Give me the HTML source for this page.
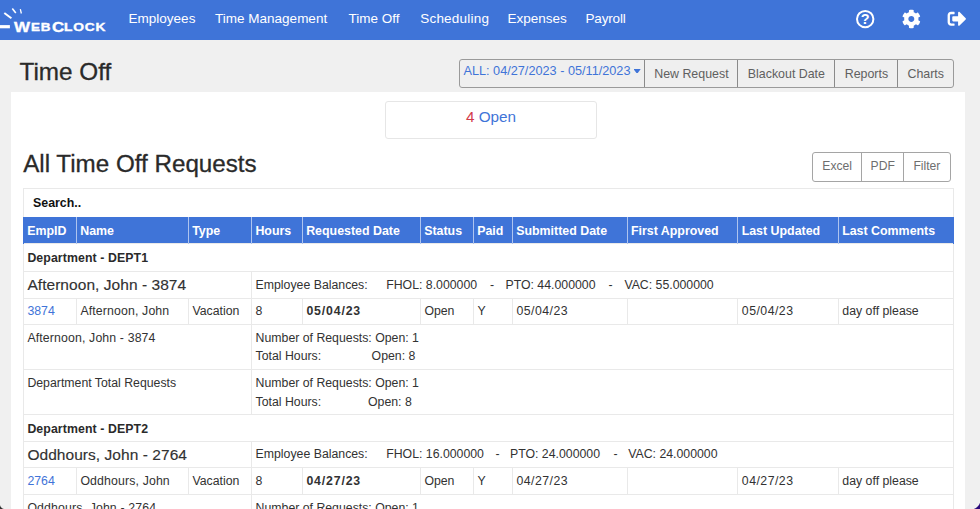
<!DOCTYPE html>
<html lang="en">
<head>
<meta charset="utf-8">
<title>Time Off</title>
<style>
*{box-sizing:border-box;margin:0;padding:0}
html,body{width:980px;height:509px;overflow:hidden}
body{background:#f0f0f0;font-family:"Liberation Sans",Arial,sans-serif;color:#2b2b2b;position:relative;font-size:12.3px}
.nav{position:absolute;left:0;top:0;width:980px;height:40px;background:#3f74d8}
.nav a{position:absolute;top:9.7px;height:18px;line-height:18px;color:#fff;font-size:13.5px;text-decoration:none;white-space:nowrap}
.logo span{position:absolute;color:#fff;font-weight:700;white-space:nowrap;transform-origin:0 50%;line-height:18px;height:18px;top:17.8px;-webkit-text-stroke:.35px #fff}
.logo .b{font-size:14.9px}
.logo .s{font-size:10.6px;top:18.35px;letter-spacing:.6px}
.navsvg{position:absolute;left:0;top:0}
h1{position:absolute;left:19.5px;top:55.6px;font-size:24.3px;font-weight:400;line-height:32px;color:#2a2a2a;white-space:nowrap;-webkit-text-stroke:.3px #2a2a2a}
.card{position:absolute;left:10.6px;top:91.5px;width:954.4px;height:430px;background:#fff}
.grp{position:absolute;display:flex;border:1px solid #9a9a9a;border-radius:3px;overflow:hidden}
.grp div{white-space:nowrap;border-left:1px solid #8a8a8a;color:#555;font-size:12.4px;text-align:center}
.grp div:first-child{border-left:0}
.g1{left:459px;top:59px;height:29.4px;width:495px;background:#efefef}
.g1 div{line-height:29.8px;color:#606060}
.g1 .dd{color:#3f74d8;line-height:23.6px;text-align:left;padding-left:3.5px;font-size:12.7px;position:relative}
.car{position:absolute;left:173.6px;top:8.8px;width:7px;height:4.6px;background:#3f74d8;clip-path:polygon(0 8%,6% 0,94% 0,100% 8%,54% 100%,46% 100%)}
.g2{left:812px;top:151.5px;height:30px;width:138.8px;background:#fff;border-color:#a5a5a5}
.g2 div{line-height:27.6px;color:#6e6e6e;border-left-color:#a5a5a5;font-size:12.15px}
.open{position:absolute;left:385px;top:100.5px;width:212px;height:38px;border:1px solid #e6e6e6;border-radius:3px;text-align:center;font-size:15.3px;line-height:29.4px;color:#3f74d8;background:#fff}
.open b{font-weight:400;color:#d23a4a}
h2{position:absolute;left:23.2px;top:148.2px;font-size:24.2px;font-weight:400;line-height:32px;color:#2a2a2a;white-space:nowrap;-webkit-text-stroke:.3px #2a2a2a}
table{position:absolute;left:23px;top:187.5px;width:929.5px;border-collapse:collapse;table-layout:fixed;font-size:12.3px;line-height:18.3px;color:#323232}
td,th{border:1px solid #e9e9e9;padding:0 4px 0 3.4px;text-align:left;vertical-align:middle;white-space:nowrap;overflow:hidden;font-weight:400}
th{background:#3f74d8;color:#fff;font-weight:700;border:0;border-left:1px solid #aec4ef;font-size:12.4px;padding:2px 4px 0 3.2px}
th:first-child{background:#3f74d8;border-left:1px solid #3f74d8}
th:last-child{border-right:1px solid #3f74d8}
.srch td{border-bottom:0;font-weight:700;color:#111;padding-left:9px;border-radius:3px;font-size:12.4px}
.dept td{font-weight:700;color:#2a2a2a;font-size:12.3px;padding-top:2px;letter-spacing:.1px}
.big{font-size:15.5px;padding-top:1.6px;letter-spacing:.05px;-webkit-text-stroke:.15px #2f2f2f}
.bal{position:relative;height:18.3px}
.bal span{position:absolute;top:0;white-space:nowrap}
.d{letter-spacing:.47px}
b.d{letter-spacing:.85px}
.nm{letter-spacing:.14px}
a.l{color:#3f74d8;text-decoration:none}
.two td{vertical-align:top;padding-top:4.5px}
.corner{position:absolute;right:0;bottom:0;width:10px;height:10px;background:radial-gradient(circle at 0 0,rgba(42,10,122,0) 10.2px,#2a0a7a 11.2px)}
.corner2{position:absolute;left:0;bottom:0;width:4px;height:4px;background:radial-gradient(circle at 5px -1px,rgba(30,30,30,0) 4.6px,#333 5.6px)}
pre,span.p{white-space:pre;font-family:inherit}
</style>
</head>
<body>
<div class="nav">
  <svg class="navsvg" width="980" height="40" viewBox="0 0 980 40">
    <g stroke="#fff" stroke-linecap="butt" fill="none">
      <line x1="0" y1="26.7" x2="9.9" y2="26.7" stroke-width="3.2"/>
      <line x1="4.3" y1="13" x2="11.4" y2="18.3" stroke-width="2"/>
      <line x1="12.3" y1="8.6" x2="15.8" y2="12.9" stroke-width="1.6"/>
      <line x1="20.3" y1="9.2" x2="21.4" y2="13.5" stroke-width="1.3"/>
    </g>
    <circle cx="865.2" cy="19.1" r="8.2" fill="none" stroke="#fff" stroke-width="2"/>
    <text x="865.2" y="24.2" text-anchor="middle" font-family="Liberation Sans, sans-serif" font-weight="700" font-size="14.5" fill="#fff">?</text>
    <g transform="translate(901.8,9.4) scale(0.0372)" fill="#fff">
      <path d="M487.4 315.7l-42.600-24.600c4.300-23.200 4.300-47 0-70.200l42.600-24.600c4.900-2.800 7.100-8.600 5.500-14-11.100-35.600-30-67.800-54.700-94.600-3.800-4.100-10-5.100-14.800-2.300L380.800 110c-17.900-15.400-38.500-27.300-60.800-35.100V25.800c0-5.600-3.900-10.500-9.400-11.700-36.700-8.200-74.300-7.800-109.200 0-5.500 1.200-9.400 6.100-9.400 11.700V75c-22.200 7.900-42.800 19.800-60.800 35.100L88.700 85.500c-4.900-2.800-11-1.900-14.800 2.300-24.700 26.700-43.600 58.900-54.700 94.600-1.700 5.400.6 11.200 5.500 14L67.300 221c-4.300 23.200-4.300 47 0 70.200l-42.600 24.600c-4.900 2.800-7.100 8.600-5.500 14 11.100 35.600 30 67.800 54.700 94.600 3.800 4.100 10 5.100 14.800 2.300l42.600-24.600c17.900 15.400 38.500 27.300 60.800 35.100v49.200c0 5.600 3.900 10.500 9.400 11.700 36.700 8.200 74.300 7.800 109.200 0 5.500-1.200 9.400-6.100 9.400-11.700v-49.200c22.200-7.900 42.800-19.800 60.800-35.100l42.600 24.600c4.900 2.800 11 1.900 14.800-2.300 24.700-26.700 43.600-58.900 54.700-94.600 1.500-5.500-.7-11.300-5.600-14.100zM256 336c-44.100 0-80-35.900-80-80s35.900-80 80-80 80 35.900 80 80-35.900 80-80 80z"/>
    </g>
    <g transform="translate(947.6,9.5) scale(0.0364)" fill="#fff">
      <path d="M497 273L329 441c-15 15-41 4.500-41-17v-96H152c-13.300 0-24-10.700-24-24v-96c0-13.300 10.700-24 24-24h136V88c0-21.400 25.900-32 41-17l168 168c9.300 9.400 9.300 24.600 0 34zM192 436v-40c0-6.600-5.400-12-12-12H96c-17.700 0-32-14.300-32-32V160c0-17.700 14.300-32 32-32h84c6.600 0 12-5.400 12-12V76c0-6.600-5.400-12-12-12H96c-53 0-96 43-96 96v192c0 53 43 96 96 96h84c6.600 0 12-5.400 12-12z"/>
    </g>
  </svg>
  <div class="logo"><span class="b" style="left:14.2px;transform:scaleX(1.14)">W</span><span class="s" style="left:31.4px;transform:scaleX(1.27)">EB</span><span class="b" style="left:52.2px;transform:scaleX(1.13)">C</span><span class="s" style="left:64.4px;transform:scaleX(1.3)">LOCK</span></div>
  <a style="left:128.6px">Employees</a>
  <a style="left:215.1px">Time Management</a>
  <a style="left:348.4px">Time Off</a>
  <a style="left:420.2px;letter-spacing:.22px">Scheduling</a>
  <a style="left:507.4px">Expenses</a>
  <a style="left:585.5px;letter-spacing:-.17px">Payroll</a>
</div>

<h1>Time Off</h1>

<div class="grp g1">
  <div class="dd" style="width:184.4px">ALL: 04/27/2023 - 05/11/2023<i class="car"></i></div>
  <div style="width:93px">New Request</div>
  <div style="width:97px">Blackout Date</div>
  <div style="width:63px">Reports</div>
  <div style="flex:1">Charts</div>
</div>

<div class="card"></div>

<div class="open"><b>4</b> Open</div>

<h2>All Time Off Requests</h2>

<div class="grp g2">
  <div style="width:48.4px">Excel</div>
  <div style="width:41.6px">PDF</div>
  <div style="flex:1">Filter</div>
</div>

<table>
  <colgroup>
    <col style="width:53px"><col style="width:112px"><col style="width:63.2px"><col style="width:50.8px"><col style="width:118px"><col style="width:53px"><col style="width:39px"><col style="width:114.8px"><col style="width:110.7px"><col style="width:100.5px"><col style="width:115px">
  </colgroup>
  <tr class="srch" style="height:29.2px"><td colspan="11">Search..</td></tr>
  <tr style="height:26.5px"><th>EmpID</th><th>Name</th><th>Type</th><th>Hours</th><th>Requested Date</th><th>Status</th><th>Paid</th><th>Submitted Date</th><th>First Approved</th><th>Last Updated</th><th>Last Comments</th></tr>
  <tr class="dept" style="height:27.9px"><td colspan="11">Department - DEPT1</td></tr>
  <tr style="height:26.5px"><td colspan="3" class="big">Afternoon, John - 3874</td><td colspan="8"><div class="bal"><span style="left:0">Employee Balances:</span><span style="left:130.6px">FHOL: 8.000000</span><span style="left:234.4px">-</span><span style="left:249.9px">PTO: 44.000000</span><span style="left:353px">-</span><span style="left:368.8px">VAC: 55.000000</span></div></td></tr>
  <tr style="height:26px"><td><a class="l">3874</a></td><td class="nm">Afternoon, John</td><td>Vacation</td><td>8</td><td><b class="d">05/04/23</b></td><td>Open</td><td>Y</td><td class="d">05/04/23</td><td></td><td class="d">05/04/23</td><td>day off please</td></tr>
  <tr class="two" style="height:45.3px"><td colspan="3" class="nm">Afternoon, John - 3874</td><td colspan="8">Number of Requests: Open: 1<br>Total Hours:<span style="margin-left:50.4px">Open: 8</span></td></tr>
  <tr class="two" style="height:45px"><td colspan="3">Department Total Requests</td><td colspan="8">Number of Requests: Open: 1<br>Total Hours:<span style="margin-left:46.8px">Open: 8</span></td></tr>
  <tr class="dept" style="height:26.9px"><td colspan="11">Department - DEPT2</td></tr>
  <tr style="height:26.5px"><td colspan="3" class="big">Oddhours, John - 2764</td><td colspan="8"><div class="bal"><span style="left:0">Employee Balances:</span><span style="left:130.6px">FHOL: 16.000000</span><span style="left:240px">-</span><span style="left:254.4px">PTO: 24.000000</span><span style="left:357.8px">-</span><span style="left:372.6px">VAC: 24.000000</span></div></td></tr>
  <tr style="height:26.6px"><td><a class="l">2764</a></td><td class="nm">Oddhours, John</td><td>Vacation</td><td>8</td><td><b class="d">04/27/23</b></td><td>Open</td><td>Y</td><td class="d">04/27/23</td><td></td><td class="d">04/27/23</td><td>day off please</td></tr>
  <tr class="two" style="height:45.3px"><td colspan="3" class="nm">Oddhours, John - 2764</td><td colspan="8">Number of Requests: Open: 1<br>Total Hours:<span style="margin-left:50.4px">Open: 8</span></td></tr>
</table>

<div class="corner"></div>
<div class="corner2"></div>
</body>
</html>
